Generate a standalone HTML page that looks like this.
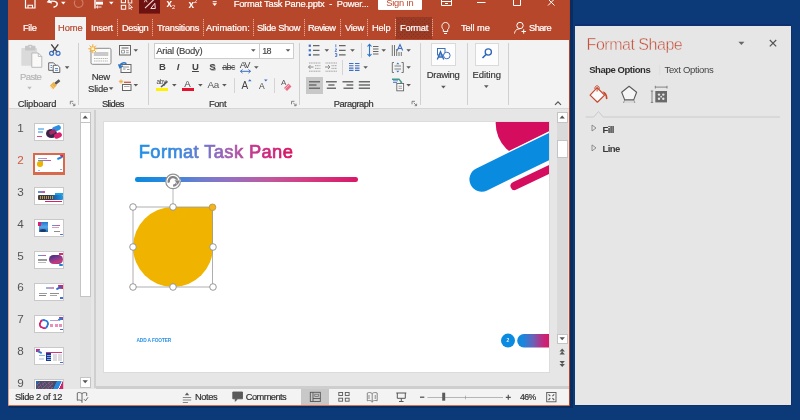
<!DOCTYPE html>
<html>
<head>
<meta charset="utf-8">
<title>Format Task Pane</title>
<style>
*{box-sizing:border-box;margin:0;padding:0}
html,body{width:800px;height:420px;overflow:hidden}
body{background:#0c3a78;font-family:"Liberation Sans",sans-serif;position:relative;font-size:9.5px;color:#333}
.abs{position:absolute}
.t{position:absolute;white-space:nowrap;line-height:1}
#win{position:absolute;left:8px;top:0;width:561px;height:405px;background:#e6e6e6;overflow:hidden;will-change:transform}
#hdr{position:absolute;left:0;top:0;width:561px;height:39.500px;background:#b7472a}
#ribbon{position:absolute;left:0;top:40px;width:561px;height:69px;background:#f3f3f3;border-bottom:1px solid #d6d6d6}
.tab{position:absolute;top:23.8px;color:#fff;font-size:9.3px;-webkit-text-stroke:0.200px currentColor;white-space:nowrap;line-height:1}
.tsep{position:absolute;top:19px;width:1px;height:17px;background:repeating-linear-gradient(to bottom,rgba(255,225,215,.6) 0 1px,rgba(255,225,215,.15) 1px 2px)}
.gsep{position:absolute;top:3px;width:1px;height:62px;background:#d0d0d0}
.glabel{position:absolute;top:59.700px;font-size:9.3px;color:#333;-webkit-text-stroke:0.200px #333;white-space:nowrap;line-height:1}
.rt{font-size:9.500px;color:#333;-webkit-text-stroke:0.150px currentColor}
.dd{position:absolute;width:0;height:0;border-left:2.5px solid transparent;border-right:2.5px solid transparent;border-top:3px solid #555}
.tn{font-size:11.700px}
.th{width:29.500px;height:18.200px;background:#fff;border:1px solid #c9c9c9;overflow:hidden}
.th i{position:absolute;display:block}
#slide{position:absolute;left:96px;top:122px;width:444.600px;height:250px;background:#fff;overflow:hidden;box-shadow:0 0 0 1px #dcdcdc}
#status{position:absolute;left:0;top:389px;width:561px;height:16px;background:#f3f3f3}
.st{font-size:9.300px;color:#333;-webkit-text-stroke:0.200px #333}
#pane{position:absolute;left:575px;top:26px;width:216px;height:379px;background:#e6e6e6;border:1px solid #e6e6e6;box-shadow:0 -2px 0 #0b326c, 0 1px 0 #0b326c, 1px 0 0 #0b326c;will-change:transform}
</style>
</head>
<body>
<div class="abs" style="left:9px;top:0;width:563.500px;height:408px;background:#0a2c60"></div>
<div class="abs" style="left:8px;top:0;width:562px;height:406px;background:#cf7257"></div>
<div class="abs" style="left:569px;top:0;width:1px;height:405.500px;background:#b04426"></div>
<div id="win">
  <div id="hdr">
    <!-- QAT icons -->
    <svg class="abs" style="left:0;top:0" width="232" height="17" viewBox="8 0 232 17" fill="none" stroke="#fff" stroke-width="1.1">
      <!-- save -->
      <path d="M25.5 -2 V8 H35 V-2" stroke-width="1.2"/>
      <path d="M28 8 V5.3 H32.5 V8" />
      <!-- undo -->
      <path d="M51 -1.5 L47.8 1.8 L52 3" stroke-width="1.3"/>
      <path d="M48.5 1.8 C53 0.3 57.5 1.5 57.2 4.3 C57 6 55.5 6.8 53.5 7.2" stroke-width="1.4"/>
      <path d="M61 1.8 L63.3 4.4 L65.6 1.800 Z" fill="#fff" stroke="none"/>
      <!-- redo dim -->
      <path d="M75.200 0.5 A4.3 4.3 0 1 0 80.500 -0.8" stroke="#d07f69" stroke-width="1.1"/>
      <!-- from beginning -->
      <path d="M95 -1 V8.600" stroke-width="1.400"/>
      <rect x="96" y="1.700" width="7" height="2.900" fill="#fff" stroke="none"/>
      <path d="M96 -0.300 H103 M98.500 7 H101.500 M96.300 7 L97.800 5.800 V8.200 Z" stroke-width="0.900"/>
      <path d="M109 1.8 L111.300 4.400 L113.600 1.800 Z" fill="#fff" stroke="none"/>
      <!-- shapes icon -->
      <rect x="121.300" y="-1.500" width="4.200" height="4.200" stroke-width="1"/>
      <rect x="121.300" y="5.300" width="4.400" height="3.900" stroke-width="1"/>
      <rect x="128.200" y="-1.500" width="3.600" height="4.500" stroke-width="0.900"/>
      <path d="M129 4.200 V9.200 L130.300 7.800 L131.500 9.800 M129 4.200 L132.500 7.500 H130.500" stroke-width="0.800"/>
      <!-- highlighted -->
      <rect x="139" y="-1" width="21" height="14.600" fill="#6e1211" stroke="none"/>
      <path d="M145 8.200 L154.300 -0.800" stroke-width="1.100" stroke="#f3dede"/>
      <path d="M154.800 3.300 L150.800 8.500 H155.300 Z" stroke-width="1" stroke="#f3dede" fill="none"/>
      <path d="M144.300 2.300 L145.700 -0.800 L147.100 2.300" stroke-width="0.800" stroke="#f3dede"/>
      <!-- customize -->
      <path d="M212.700 1.700 H216.700" stroke-width="1"/>
      <path d="M212.400 3.300 L214.700 5.900 L217 3.300 Z" fill="#fff" stroke="none"/>
    </svg>
    <div class="t" style="left:158.500px;top:-1.300px;color:#fff;font-size:10px;font-weight:bold">x<span style="font-size:5.500px;vertical-align:-1.500px;font-weight:normal">2</span></div>
    <div class="t" style="left:180.500px;top:-1.300px;color:#fff;font-size:10px;font-weight:bold">x<span style="font-size:5.500px;vertical-align:4.500px;font-weight:normal">2</span></div>
    <div class="t" id="ttl" style="left:225.7px;top:-0.5px;color:#fff;-webkit-text-stroke:0.200px #fff;font-size:9.3px;letter-spacing:-0.22px">Format Task Pane.pptx &nbsp;- &nbsp;Power...</div>
    <div class="abs" style="left:370px;top:-4px;width:44px;height:13.7px;background:#fff;border-radius:1px"></div>
    <div class="t" id="signin" style="left:378.2px;top:-1.3px;color:#c0492c;font-size:9.3px;letter-spacing:-0.17px">Sign in</div>
    <svg class="abs" style="left:425px;top:0" width="136" height="17" viewBox="433 0 136 17" fill="none" stroke="#fff" stroke-width="1">
      <path d="M441.5 -1 V5.5 H451.5 V-1 M441.5 1.5 H451.5 M445 3.5 H448" />
      <path d="M477 2.5 H485.5" />
      <path d="M513.5 -1 V5.5 H520.5 V-1" />
      <path d="M548 -1 L554.5 5.5 M554.5 -1 L548 5.5" />
    </svg>
    <!-- tabs -->
    <div class="abs" style="left:47px;top:17px;width:31px;height:23px;background:#f3f3f3"></div>
    <div class="abs" style="left:388.300px;top:16.500px;width:35.600px;height:22.500px;background:#9c3b24;background-image:radial-gradient(rgba(70,30,50,.5) 0.5px,transparent 0.8px),radial-gradient(rgba(70,30,50,.5) 0.5px,transparent 0.8px);background-size:4.400px 4.400px;background-position:0 0,2.200px 2.200px"></div>
    <div class="tab" id="tb0" style="letter-spacing:-0.37px;left:15px">File</div>
    <div class="tab" id="tb1" style="letter-spacing:-0.02px;left:50px;color:#b7472a">Home</div>
    <div class="tab" id="tb2" style="letter-spacing:-0.21px;left:83px">Insert</div>
    <div class="tab" id="tb3" style="letter-spacing:-0.46px;left:114px">Design</div>
    <div class="tab" id="tb4" style="letter-spacing:-0.28px;left:149px">Transitions</div>
    <div class="tab" id="tb5" style="letter-spacing:-0.02px;left:198px">Animation:</div>
    <div class="tab" id="tb6" style="letter-spacing:-0.35px;left:249px">Slide Show</div>
    <div class="tab" id="tb7" style="letter-spacing:-0.5px;left:300px">Review</div>
    <div class="tab" id="tb8" style="letter-spacing:-0.25px;left:337px">View</div>
    <div class="tab" id="tb9" style="letter-spacing:-0.19px;left:364px">Help</div>
    <div class="tab" id="tb10" style="letter-spacing:-0.23px;left:392px">Format</div>
    <div class="tab" id="tb11" style="letter-spacing:-0.1px;left:453px">Tell me</div>
    <div class="tab" id="tb12" style="letter-spacing:-0.56px;left:521px">Share</div>
    <div class="tsep" style="left:109px"></div>
    <div class="tsep" style="left:144px"></div>
    <div class="tsep" style="left:195px"></div>
    <div class="tsep" style="left:245px"></div>
    <div class="tsep" style="left:296px"></div>
    <div class="tsep" style="left:332px"></div>
    <div class="tsep" style="left:359px"></div>
    <div class="tsep" style="left:387px"></div>
    <div class="tsep" style="left:424px"></div>
    <svg class="abs" style="left:430px;top:19px" width="90" height="20" viewBox="438 19 90 20" fill="none" stroke="#fff" stroke-width="1">
      <path d="M443.3 29.5 C441 27.5 441.5 22.5 445.5 22.5 C449.500 22.5 450 27.5 447.700 29.500 V31.5 H443.3 Z M444 33.5 H447"/>
      <circle cx="520" cy="25.5" r="3.2"/>
      <path d="M514.500 33.500 C515 30 517 29 519.5 29 M521.500 31.500 H526 M523.700 29.300 V33.700"/>
    </svg>
  </div>
  <div class="abs" style="left:0;top:39.500px;width:561px;height:2px;background:#f3f3f3"></div>
  <div id="ribbon">
    <!-- font combo boxes -->
    <div class="abs" style="left:145.500px;top:2.500px;width:106px;height:16px;background:#fff;border:1px solid #cdcdcd"></div>
    <div class="abs" style="left:251.500px;top:2.500px;width:34px;height:16px;background:#fff;border:1px solid #cdcdcd;border-left:none"></div>
    <!-- selected align-left -->
    <div class="abs" style="left:298px;top:36.500px;width:17px;height:17px;background:#c8c8c8"></div>
    <!-- big icon boxes -->
    <div class="abs" style="left:423px;top:2.500px;width:24.500px;height:23px;background:#fdfdfd;border:1px solid #dadada"></div>
    <div class="abs" style="left:467px;top:2.500px;width:24px;height:23px;background:#fdfdfd;border:1px solid #dadada"></div>
    <!-- group separators -->
    <div class="gsep" style="left:70px"></div>
    <div class="gsep" style="left:139.500px"></div>
    <div class="gsep" style="left:291px"></div>
    <div class="gsep" style="left:412px"></div>
    <div class="gsep" style="left:458.500px"></div>
    <div class="gsep" style="left:499.500px"></div>
    <!-- small separators -->
    <div class="abs" style="left:225.500px;top:38px;width:1px;height:15px;background:#d4d4d4"></div>
    <div class="abs" style="left:265.700px;top:38px;width:1px;height:15px;background:#d4d4d4"></div>
    <div class="abs" style="left:352.800px;top:3px;width:1px;height:15px;background:#d4d4d4"></div>
    <div class="abs" style="left:334px;top:20px;width:1px;height:15px;background:#d4d4d4"></div>
    <!-- texts -->
    <div class="t rt" id="r_paste" style="letter-spacing:-0.6px;left:12px;top:31.800px;color:#b4b4b4">Paste</div>
    <div class="t rt" id="r_new" style="letter-spacing:-0.3px;left:83.800px;top:31.800px">New</div>
    <div class="t rt" id="r_slide" style="letter-spacing:-0.18px;left:80px;top:43.600px">Slide</div>
    <div class="t rt" id="r_arial" style="letter-spacing:-0.28px;left:148.200px;top:6.300px;color:#444">Arial (Body)</div>
    <div class="t rt" id="r_18" style="left:254.300px;top:6.500px;color:#444;font-size:9px;letter-spacing:-0.8px">18</div>
    <div class="t rt" id="r_drawing" style="letter-spacing:-0.28px;left:418.700px;top:30.300px">Drawing</div>
    <div class="t rt" id="r_editing" style="letter-spacing:-0.08px;left:464.500px;top:30.300px">Editing</div>
    <div class="glabel" id="g_clip" style="letter-spacing:-0.14px;left:9.700px">Clipboard</div>
    <div class="glabel" id="g_slides" style="letter-spacing:-0.55px;left:93.900px">Slides</div>
    <div class="glabel" id="g_font" style="letter-spacing:-0.37px;left:201px">Font</div>
    <div class="glabel" id="g_para" style="letter-spacing:-0.44px;left:325.800px">Paragraph</div>
    <!-- B I U S abc -->
    <div class="t" style="left:151px;top:22.300px;font-size:9.500px;font-weight:bold;color:#444">B</div>
    <div class="t" style="left:168.700px;top:22.300px;font-size:9.500px;font-style:italic;font-weight:bold;color:#444">I</div>
    <div class="t" style="left:184px;top:22.300px;font-size:9.500px;font-weight:bold;color:#444;text-decoration:underline">U</div>
    <div class="t" style="left:201.200px;top:22.300px;font-size:9.500px;font-weight:bold;color:#444;text-shadow:0.8px 0.8px 0 #aaa">S</div>
    <div class="t" style="left:214.200px;top:22.500px;font-size:9px;color:#4a4a4a;text-decoration:line-through;letter-spacing:-0.650px">abc</div>
    <div class="t" style="left:231.800px;top:21px;font-size:9.300px;color:#444;letter-spacing:-1px">AV</div>
    <div class="t" style="left:148.500px;top:38.500px;font-size:6.500px;color:#444;letter-spacing:-0.3px">aby</div>
    <div class="t" style="left:176.200px;top:39px;font-size:9.700px;color:#444">A</div>
    <div class="t" style="left:199.500px;top:40px;font-size:9.800px;color:#555;letter-spacing:-0.400px">Aa</div>
    <div class="t" style="left:233.600px;top:41.300px;font-size:10px;color:#444">A</div>
    <div class="t" style="left:251px;top:41.500px;font-size:8.500px;color:#444">A</div>
    <div class="t" style="left:273px;top:38.500px;font-size:8px;color:#555">A</div>
    <div class="abs" style="left:148.300px;top:47.800px;width:12px;height:3px;background:#fff100"></div>
    <div class="abs" style="left:174.300px;top:47.800px;width:11.800px;height:3px;background:#e8112d"></div>
    <svg class="abs" style="left:0;top:0" width="561" height="69" viewBox="8 40 561 69" fill="none">
      <!-- dropdown arrows -->
      <g fill="#5a5a5a">
        <path d="M64.800 66.300 h4.600 l-2.300 2.600z"/>
        <path d="M108.800 87.300 h4.600 l-2.300 2.600z"/>
        <path d="M133.500 49.200 h4.600 l-2.300 2.600z"/>
        <path d="M133.500 84 h4.600 l-2.300 2.600z"/>
        <path d="M251 49.200 h4.600 l-2.300 2.600z"/>
        <path d="M285.700 49.200 h4.600 l-2.300 2.600z"/>
        <path d="M254 66.200 h4.600 l-2.300 2.600z"/>
        <path d="M172 84 h4.600 l-2.300 2.600z"/>
        <path d="M198.100 84 h4.600 l-2.300 2.600z"/>
        <path d="M222.100 84 h4.600 l-2.300 2.600z"/>
        <path d="M324.500 49.200 h4.600 l-2.300 2.600z"/>
        <path d="M350.200 49.200 h4.600 l-2.300 2.600z"/>
        <path d="M381.400 49.200 h4.600 l-2.300 2.600z"/>
        <path d="M363.300 66.200 h4.600 l-2.300 2.600z"/>
        <path d="M406.300 49.200 h4.600 l-2.300 2.600z"/>
        <path d="M406.300 66.200 h4.600 l-2.300 2.600z"/>
        <path d="M406.300 84 h4.600 l-2.300 2.600z"/>
        <path d="M441.100 85.800 h4.600 l-2.300 2.600z"/>
        <path d="M484 85.300 h4.600 l-2.300 2.600z"/>
      </g>
      <path d="M27.200 86.800 h4.600 l-2.300 2.600z" fill="#bdbdbd"/>
      <!-- launchers -->
      <g stroke="#6a6a6a" stroke-width="0.800">
        <path d="M70.3 104.300 V101.300 H73.3 M72.1 102.800 L74.7 105.500 M74.9 103.700 V105.700 H72.9"/>
        <path d="M291.5 104.300 V101.300 H294.5 M293.3 102.800 L295.9 105.500 M296.1 103.700 V105.700 H294.1"/>
        <path d="M412.0 104.300 V101.300 H415.0 M413.8 102.800 L416.4 105.500 M416.6 103.700 V105.700 H414.6"/>
      </g>
      <path d="M555 104.800 L558 101.800 L561 104.800" stroke="#555" stroke-width="1.200"/>
      <!-- Paste (disabled) -->
      <rect x="21.300" y="48" width="15.800" height="17.800" rx="1" fill="#dadada"/>
      <rect x="25" y="45.800" width="10.500" height="4.700" rx="1" fill="#c6c6c6"/>
      <rect x="28" y="44.800" width="4.500" height="3" rx="1.300" fill="#c6c6c6"/>
      <circle cx="30.250" cy="46.800" r="0.900" fill="#ececec"/>
      <path d="M31.800 53 H38.300 L41.800 56.500 V67.300 H31.800 Z" fill="#fbf8f8" stroke="#b4b4b4" stroke-width="0.900"/>
      <path d="M38.300 53 V56.500 H41.800" stroke="#b4b4b4" stroke-width="0.800"/>
      <!-- scissors -->
      <path d="M51.300 44.300 L57.300 52.300 M58.300 44.300 L52.300 52.300" stroke="#444" stroke-width="1.400"/>
      <circle cx="51.600" cy="53.300" r="2" stroke="#3a6fc4" stroke-width="1.200"/>
      <circle cx="58" cy="53.300" r="2" stroke="#3a6fc4" stroke-width="1.200"/>
      <!-- copy -->
      <path d="M48.700 62.800 H53.500 L55.500 64.800 V70.300 H48.700 Z" fill="#fafafa" stroke="#555" stroke-width="0.900"/>
      <path d="M53.200 65.300 H57.700 L59.800 67.400 V72.500 H53.200 Z" fill="#fafafa" stroke="#555" stroke-width="0.900"/>
      <path d="M50.500 65.500 H52 M50.500 67.500 H52 M55 68.500 H58 M55 70.300 H58" stroke="#3a6fc4" stroke-width="0.800"/>
      <!-- format painter -->
      <path d="M55 84 L59.500 80.300" stroke="#555" stroke-width="2.600"/>
      <path d="M50 85.500 L53.500 82 L56.800 85.300 L53.300 89.300 Z" fill="#eeb14a"/>
      <path d="M50 86.500 L52.500 89.500 M52 85 L54.500 88" stroke="#f7d9a0" stroke-width="0.600"/>
      <!-- New slide -->
      <rect x="91" y="48.300" width="20" height="16" rx="1.500" fill="#fbfbfb" stroke="#8a8a8a" stroke-width="1"/>
      <rect x="93.800" y="52" width="14.500" height="4" fill="#c9c9c9"/>
      <path d="M94 58.500 H108 M94 61 H108" stroke="#b5b5b5" stroke-width="1" stroke-dasharray="1.500 0.700"/>
      <g stroke="#f0a830" stroke-width="1">
        <path d="M92.800 44.300 V53.300 M88.300 48.800 H97.300 M89.600 45.600 L96 52 M96 45.600 L89.600 52"/>
      </g>
      <rect x="91" y="47" width="3.600" height="3.600" fill="#fff3c4" stroke="#f0a830" stroke-width="0.700"/>
      <!-- layout -->
      <rect x="119.500" y="45.500" width="11" height="9.500" fill="#fafafa" stroke="#666" stroke-width="1"/>
      <path d="M121.500 48 H128.500" stroke="#777" stroke-width="1.200"/>
      <path d="M121.500 50.300 H124.500 V53 H121.500 Z M126 50.700 H128.700 M126 52.700 H128.700" stroke="#888" stroke-width="0.800"/>
      <!-- reset -->
      <rect x="121" y="64.500" width="10" height="8" fill="#fafafa" stroke="#666" stroke-width="1"/>
      <path d="M123 67 H129 M123 69 H125.500 M127 69.500 H129.500" stroke="#888" stroke-width="0.900"/>
      <path d="M120 67.300 C119.300 63.500 123.500 61.800 126.500 63.600 M118.600 64.300 L119.900 67.800 L122.900 65.800" stroke="#2e75c8" stroke-width="1.400"/>
      <!-- section -->
      <path d="M124 82.300 H131" stroke="#d0563a" stroke-width="1.300"/>
      <rect x="122.500" y="84.500" width="8.500" height="6" fill="#fafafa" stroke="#666" stroke-width="1"/>
      <path d="M124 86.500 H129.500" stroke="#999" stroke-width="0.800"/>
      <path d="M121 79.300 V83.700 M118.800 81.500 H123.200 M119.500 80 L122.500 83 M122.500 80 L119.500 83" stroke="#f0a830" stroke-width="0.700"/>
      <!-- AV arrow -->
      <path d="M240.500 71.300 H250.500 M242.500 69.500 L240.500 71.300 L242.500 73.100 M248.500 69.500 L250.500 71.300 L248.500 73.100" stroke="#3a6fc4" stroke-width="1"/>
      <!-- highlighter pen -->
      <path d="M161 87 L167.500 81.300" stroke="#555" stroke-width="1.600"/>
      <!-- grow/shrink carets -->
      <path d="M248 81.300 L249.800 79.300 L251.600 81.300 Z" fill="#3a6fc4"/>
      <path d="M264 79.500 L265.800 81.500 L267.600 79.500 Z" fill="#3a6fc4"/>
      <!-- clear formatting eraser -->
      <path d="M284 88 L288.500 83.500 L291.500 86.500 L287 91 Z" fill="#e8708a"/>
      <path d="M285 89 L289.500 84.500" stroke="#f8c0cc" stroke-width="0.800"/>
      <!-- bullets -->
      <g fill="#3a6fc4"><rect x="308.700" y="44.600" width="2.200" height="2.200"/><rect x="308.700" y="49.200" width="2.200" height="2.200"/><rect x="308.700" y="53.800" width="2.200" height="2.200"/></g>
      <path d="M313 45.700 H319.500 M313 50.300 H319.500 M313 54.900 H319.500" stroke="#666" stroke-width="1.200"/>
      <!-- numbering -->
      <path d="M335.800 44.300 V47.300 M335 49 H336.800 L335 51.500 H336.800 M335 53.500 H336.800 V56.500 H335 M335.500 55 H336.800" stroke="#3a6fc4" stroke-width="0.800"/>
      <path d="M339 45.700 H345.600 M339 50.300 H345.600 M339 54.900 H345.600" stroke="#666" stroke-width="1.200"/>
      <!-- line spacing -->
      <path d="M369.500 44.500 V56 M367.500 46.500 L369.500 44.300 L371.500 46.500 M367.500 54 L369.500 56.200 L371.500 54" stroke="#2e75c8" stroke-width="1.100"/>
      <path d="M373 46.500 H378.500 M373 49 H378.500 M373 51.500 H378.500 M373 54 H378.500" stroke="#666" stroke-width="1"/>
      <!-- text direction -->
      <path d="M392.300 45 V56 M394.500 45 V56 M396.700 49 V56 M399 52 V56 M401.300 52 V56" stroke="#666" stroke-width="0.900"/>
      <path d="M397.300 50.500 L400 44.500 L402.700 50.500 M398.300 48.500 H401.700" stroke="#3a6fc4" stroke-width="1.100"/>
      <!-- decrease / increase indent -->
      <path d="M309 63 H320.500 M315 65.700 H320.500 M315 68.400 H320.500 M309 71.200 H320.500" stroke="#9a9a9a" stroke-width="0.900" stroke-dasharray="1.200 0.500"/>
      <path d="M308.500 67 H313.500 M310.500 65 L308.500 67 L310.500 69" stroke="#8a8a8a" stroke-width="1"/>
      <path d="M325.500 63 H337 M331.500 65.700 H337 M331.500 68.400 H337 M325.500 71.200 H337" stroke="#9a9a9a" stroke-width="0.900" stroke-dasharray="1.200 0.500"/>
      <path d="M325 67 H330 M328 65 L330 67 L328 69" stroke="#8a8a8a" stroke-width="1"/>
      <!-- columns -->
      <path d="M349 63.500 H353.500 M349 65.800 H353.500 M349 68.100 H353.500 M349 70.400 H353.500 M355 63.500 H359.500 M355 65.800 H359.500 M355 68.100 H359.500 M355 70.400 H359.500" stroke="#3a6fc4" stroke-width="1.100"/>
      <!-- align text -->
      <path d="M394 62.500 H392.300 V72.500 H394 M401.500 62.500 H403.300 V72.500 H401.500" stroke="#666" stroke-width="0.900"/>
      <path d="M394.500 66 H401 M394.500 69 H401" stroke="#777" stroke-width="0.900"/>
      <path d="M396.300 64.300 L397.800 62.500 L399.300 64.300 Z M396.300 70.700 L397.800 72.500 L399.300 70.700 Z" fill="#3a6fc4"/>
      <!-- smartart -->
      <path d="M392 79.300 H399 L401.500 82.300 L399 85.300" stroke="#3f9a8a" stroke-width="1.400"/>
      <path d="M393 80.800 H398 M393 82.500 H397" stroke="#3a6fc4" stroke-width="0.800"/>
      <rect x="396.800" y="83.500" width="6.800" height="7.300" fill="#fafafa" stroke="#666" stroke-width="0.900"/>
      <path d="M398.500 86.200 H402 M398.500 88.300 H402" stroke="#888" stroke-width="0.800"/>
      <!-- align left/center/right/justify -->
      <g stroke="#6e6e6e" stroke-width="1.400">
        <path d="M309 81.700 H320 M309 85 H316.500 M309 88.300 H320"/>
        <path d="M326 81.700 H336.800 M328.300 85 H334.500 M326.800 88.300 H336"/>
        <path d="M342.500 81.700 H353.300 M346.500 85 H353.300 M343.500 88.300 H353.300"/>
        <path d="M358.800 81.700 H370 M358.800 85 H370 M358.800 88.300 H370"/>
      </g>
      <!-- Drawing icon -->
      <rect x="437.500" y="48.500" width="7.500" height="6.500" stroke="#3a6fc4" stroke-width="1"/>
      <circle cx="446.800" cy="55.500" r="3.300" fill="#fdfdfd" stroke="#3a6fc4" stroke-width="1"/>
      <path d="M437.300 59.500 L440.500 51.800 L443.700 59.500 M438.500 57 H442.500" stroke="#2e66b8" stroke-width="1.300" fill="none"/>
      <!-- Editing icon -->
      <circle cx="488.300" cy="52" r="3.100" stroke="#2e66b8" stroke-width="1.300"/>
      <path d="M486 54.500 L482.500 58" stroke="#2e66b8" stroke-width="1.600"/>
    </svg>
  </div>
  <div id="work">
<div class="t tn" style="left:9.200px;top:121.97px;color:#555">1</div>
<div class="abs th" style="left:26.300px;top:123.30px"><i style="left:3px;top:4px;width:6px;height:1.500px;background:#8fc7f0"></i><i style="left:3px;top:7px;width:5px;height:1.500px;background:#8fc7f0"></i><i style="left:2px;top:11.500px;width:5px;height:1.500px;background:#e0458a"></i><i style="left:11px;top:4.500px;width:11px;height:9px;border-radius:50%;background:#3a2348"></i><i style="left:17px;top:1.500px;width:9px;height:5px;border-radius:3px;background:#2d8fe0;transform:rotate(-25deg)"></i><i style="left:19px;top:9px;width:8px;height:5px;border-radius:3px;background:#d8206e;transform:rotate(-25deg)"></i><i style="left:14px;top:6px;width:7px;height:4px;border-radius:2px;background:#a02868;transform:rotate(-25deg)"></i></div>
<div class="t tn" style="left:9.200px;top:153.87px;color:#d05a3a">2</div>
<div class="abs" style="left:24.600px;top:153.00px;width:32.400px;height:21.600px;background:#d8694a"></div>
<div class="abs th" style="left:26.800px;top:155.20px;width:28px;height:17.200px;border:none"><i style="left:2.800px;top:2.400px;width:9.600px;height:1.100px;background:linear-gradient(90deg,#7ab8ee,#e070aa)"></i><i style="left:2.800px;top:5.100px;width:13.400px;height:0.900px;background:linear-gradient(90deg,#4aa0e8,#d8509a)"></i><i style="left:2.400px;top:6.300px;width:5.500px;height:5.300px;border-radius:50% 0 50% 50%;background:#f0b400"></i><i style="left:21.800px;top:1.800px;width:5.500px;height:2px;border-radius:1px;background:#1a8ae0;transform:rotate(-25deg)"></i><i style="left:25.300px;top:0.300px;width:2.700px;height:2px;background:#d8206e;border-radius:0 0 0 2.500px"></i><i style="left:24.800px;top:14.300px;width:2.600px;height:1px;background:#7a9ae0;border-radius:1px"></i><i style="left:2.800px;top:14.500px;width:2px;height:0.700px;background:#9ac0ee"></i></div>
<div class="t tn" style="left:9.200px;top:185.77px;color:#555">3</div>
<div class="abs th" style="left:26.300px;top:187.10px"><i style="left:3px;top:3px;width:7px;height:1.500px;background:linear-gradient(90deg,#4aa0e8,#d8509a)"></i><i style="left:3px;top:6.500px;width:25px;height:5.500px;background:linear-gradient(90deg,#4a4038,#2a3a58 40%,#1a78c8 80%,#20a0e0);border-radius:1px"></i><i style="left:5px;top:8px;width:13px;height:2.500px;background:repeating-linear-gradient(90deg,#e0b040 0 1px,#3a3040 1px 2px);opacity:.8"></i><i style="left:20px;top:4.500px;width:8px;height:2px;background:#20a0e0"></i><i style="left:10px;top:12.500px;width:17px;height:1.300px;background:#d8206e"></i></div>
<div class="t tn" style="left:9.200px;top:217.67px;color:#555">4</div>
<div class="abs th" style="left:26.300px;top:219.00px"><i style="left:3.500px;top:1.500px;width:9px;height:10px;background:linear-gradient(180deg,#2078d0,#58a8e8 50%,#2868b0)"></i><i style="left:3px;top:1.500px;width:2.500px;height:4px;background:#d8206e"></i><i style="left:5px;top:8.500px;width:6px;height:3px;background:#1a3a70;border-radius:50%"></i><i style="left:17px;top:4.500px;width:8px;height:1.500px;background:linear-gradient(90deg,#4aa0e8,#d8509a)"></i><i style="left:17px;top:7px;width:7px;height:1px;background:#d8a0c0"></i><i style="left:19px;top:10.500px;width:6px;height:1.200px;background:#8e8e8e"></i><i style="left:25px;top:13.500px;width:3px;height:1.300px;background:#4a6ad0;border-radius:1px"></i></div>
<div class="t tn" style="left:9.200px;top:249.57px;color:#555">5</div>
<div class="abs th" style="left:26.300px;top:250.90px"><i style="left:3px;top:3px;width:8px;height:1.300px;background:linear-gradient(90deg,#4aa0e8,#d8509a)"></i><i style="left:3px;top:7.500px;width:9px;height:1.200px;background:#9a9a9a"></i><i style="left:3px;top:9.800px;width:8px;height:0.800px;background:#bbb"></i><i style="left:14px;top:3.500px;width:14px;height:8.500px;border-radius:4.500px;background:linear-gradient(160deg,#3a2a70,#7a3a90 40%,#d03878 75%,#3a4898)"></i><i style="left:24px;top:1.500px;width:4px;height:2px;background:#e02870"></i><i style="left:24px;top:12.500px;width:4px;height:1.300px;background:#2080e0;border-radius:1px"></i></div>
<div class="t tn" style="left:9.200px;top:281.47px;color:#555">6</div>
<div class="abs th" style="left:26.300px;top:282.80px"><i style="left:11px;top:3.500px;width:8px;height:1.300px;background:linear-gradient(90deg,#8ab8e8,#e088b8)"></i><i style="left:22.500px;top:1px;width:5.500px;height:4.500px;background:#d8206e;border-radius:0 0 0 4px"></i><i style="left:21px;top:3.500px;width:6px;height:2.300px;background:#2868d0;border-radius:1px;transform:rotate(-25deg)"></i><i style="left:3.500px;top:9px;width:8px;height:1.200px;background:#9a9a9a"></i><i style="left:3.500px;top:11.500px;width:7px;height:1.200px;background:#888"></i><i style="left:15px;top:9px;width:9px;height:1.200px;background:#8e8e8e"></i><i style="left:15px;top:11.500px;width:7px;height:1.200px;background:#a4a4a4"></i><i style="left:25px;top:13.700px;width:3px;height:1.200px;background:#4a6ad0"></i></div>
<div class="t tn" style="left:9.200px;top:313.37px;color:#555">7</div>
<div class="abs th" style="left:26.300px;top:314.70px"><i style="left:3.500px;top:3.500px;width:9.500px;height:9.500px;border-radius:50%;border:2.600px solid #2a7ad8;border-bottom-color:#d8206e;border-left-color:#d8206e;transform:rotate(20deg)"></i><i style="left:15px;top:4.500px;width:8px;height:1.200px;background:linear-gradient(90deg,#8ab8e8,#e088b8)"></i><i style="left:23.500px;top:1px;width:4.500px;height:3px;background:#d8206e;border-radius:0 0 0 3px"></i><i style="left:22.500px;top:2.500px;width:5px;height:1.800px;background:#2a7ad8;transform:rotate(-25deg)"></i><i style="left:15px;top:8.500px;width:3px;height:2.500px;background:#e890b8"></i><i style="left:19.500px;top:8.500px;width:3px;height:2.500px;background:#e890b8"></i><i style="left:24px;top:8.500px;width:3px;height:2.500px;background:#e890b8"></i><i style="left:24.500px;top:13px;width:3px;height:1.200px;background:#4a6ad0"></i></div>
<div class="t tn" style="left:9.200px;top:345.27px;color:#555">8</div>
<div class="abs th" style="left:26.300px;top:346.60px"><i style="left:1px;top:1px;width:4px;height:3px;background:#d8206e;border-radius:0 0 3px 0"></i><i style="left:2px;top:3px;width:5px;height:1.800px;background:#2a7ad8;transform:rotate(25deg)"></i><i style="left:11px;top:4px;width:15.500px;height:1.100px;background:linear-gradient(90deg,#b83a88,#e03878)"></i><i style="left:3.500px;top:7px;width:6px;height:1.200px;background:#8ab8e8"></i><i style="left:3.500px;top:10px;width:5px;height:2.500px;background:#d0dff0"></i><i style="left:11px;top:5.300px;width:5px;height:8.500px;background:#1a3a90"></i><i style="left:12px;top:7px;width:3.500px;height:5px;background:repeating-linear-gradient(0deg,#88a8e0 0 1px,#1a3a90 1px 2px)"></i><i style="left:17.500px;top:6.500px;width:4px;height:6.500px;background:#dcdce0"></i><i style="left:22.500px;top:6.500px;width:4px;height:6.500px;background:#dcdce0"></i><i style="left:25px;top:14.500px;width:3px;height:1.200px;background:#4a6ad0"></i></div>
<div class="t tn" style="left:9.200px;top:377.17px;color:#555">9</div>
<div class="abs th" style="left:26.300px;top:378.50px"><i style="left:1px;top:1px;width:27.500px;height:16px;background:linear-gradient(115deg,#1a6ac0 0 6%,#4a4e66 8% 30%,#5a5068 40%,#444a68 58%,#2a8ae0 60% 72%,#e8eef8 73% 75%,#d8206e 76% 90%,#2a8ae0 92%)"></i><i style="left:2px;top:2px;width:16px;height:14px;background:repeating-linear-gradient(60deg,rgba(216,60,130,.45) 0 0.800px,rgba(40,50,90,.0) 0.800px 2.700px),repeating-linear-gradient(-40deg,rgba(120,150,220,.4) 0 0.700px,rgba(40,50,90,0) 0.700px 3.100px)"></i><i style="left:1px;top:12px;width:5px;height:6px;background:#d8206e;transform:skewX(-30deg)"></i></div>

    <!-- thumbnail scrollbar -->
    <div class="abs" style="left:71.500px;top:111.500px;width:11.500px;height:276px;background:#d4d4d4;background-image:radial-gradient(#e8e8e8 0.6px,transparent 0.9px);background-size:2px 2px"></div>
    <div class="abs" style="left:71.500px;top:111.500px;width:11.500px;height:185.500px;background:#fff;border:1px solid #c4c4c4"></div>
    <div class="abs" style="left:71.500px;top:111.500px;width:11.500px;height:11px;background:#fff;border:1px solid #c4c4c4"></div>
    <div class="abs" style="left:71.500px;top:376.500px;width:11.500px;height:11px;background:#fff;border:1px solid #c4c4c4"></div>
    <!-- splitter -->
    <div class="abs" style="left:86px;top:110px;width:1.500px;height:278px;background:#cfcfcf"></div>
    <div class="abs" style="left:87.500px;top:386.200px;width:474px;height:2.800px;background:#cecece"></div>
    <!-- right scrollbar -->
    <div class="abs" style="left:548.500px;top:111.500px;width:11.500px;height:232px;background:#dadada"></div>
    <div class="abs" style="left:548.500px;top:111.500px;width:11.500px;height:11px;background:#fff;border:1px solid #c4c4c4"></div>
    <div class="abs" style="left:548.500px;top:139.500px;width:11.500px;height:18px;background:#fff;border:1px solid #c4c4c4"></div>
    <div class="abs" style="left:548.500px;top:333.500px;width:11.500px;height:10.500px;background:#fff;border:1px solid #c4c4c4"></div>
    <svg class="abs" style="left:0;top:109px" width="561" height="280" viewBox="8 109 561 280">
      <g fill="#555">
        <path d="M82.500 118.600 h5.400 l-2.700 -3z"/>
        <path d="M82.500 380.300 h5.400 l-2.700 3z"/>
        <path d="M559.500 118.600 h5.400 l-2.700 -3z"/>
        <path d="M559.500 337.300 h5.400 l-2.700 3z"/>
        <path d="M559.500 351.500 h5.400 l-2.700 -3z M559.500 354.500 h5.400 l-2.700 -3z"/>
        <path d="M559.500 361 h5.400 l-2.700 3z M559.500 364 h5.400 l-2.700 3z"/>
      </g>
    </svg>
    <div id="slide">
      
      <div class="abs" style="left:30.700px;top:55.200px;width:223.500px;height:4.600px;border-radius:2.300px;background:linear-gradient(90deg,#0a8ae0 0%,#2a88e0 14%,#6a7ed0 28%,#9270c4 42%,#c0589e 60%,#d43a80 78%,#d81868 100%)"></div>
      <svg class="abs" style="left:0;top:0" width="445" height="250" viewBox="104 122 445 250">
        <defs>
          <linearGradient id="pg" gradientUnits="userSpaceOnUse" x1="517" x2="549" y1="0" y2="0"><stop offset="0" stop-color="#0a8ae0"/><stop offset="0.2" stop-color="#1a86dc"/><stop offset="0.5" stop-color="#6a62b8"/><stop offset="0.8" stop-color="#c02a80"/><stop offset="1" stop-color="#d81868"/></linearGradient>
        </defs>
        <linearGradient id="tg" gradientUnits="userSpaceOnUse" x1="138" x2="293" y1="0" y2="0"><stop offset="0" stop-color="#1f90e4"/><stop offset="0.28" stop-color="#3f88dc"/><stop offset="0.42" stop-color="#6f78cc"/><stop offset="0.55" stop-color="#9a62b8"/><stop offset="0.68" stop-color="#b84a9c"/><stop offset="0.8" stop-color="#cc2c84"/><stop offset="1" stop-color="#d8145e"/></linearGradient>
        <text id="stitle" x="138.800" y="158.400" font-family="Liberation Sans, sans-serif" font-size="18.300" font-weight="normal" fill="url(#tg)" stroke="url(#tg)" stroke-width="0.700" letter-spacing="0.400">Format Task Pane</text>
        <!-- top right decoration -->
        <circle cx="531" cy="123.600" r="35.300" fill="#d40d5e"/>
        <path d="M481.700 179.400 L570 136.300" stroke="#fff" stroke-width="27.300" stroke-linecap="round"/>
        <path d="M481.700 179.400 L570 136.300" stroke="#098be0" stroke-width="24.500" stroke-linecap="round"/>
        <path d="M514.600 185.900 L570 159.400" stroke="#d40d5e" stroke-width="8.200" stroke-linecap="round"/>
        <!-- page number -->
        <circle cx="508" cy="340.600" r="7" fill="#0a8ae0"/>
        <rect x="517.200" y="334" width="45" height="13.400" rx="6.700" fill="url(#pg)"/>
        <!-- teardrop -->
        <path d="M173 207 H213 V247 A40 40 0 1 1 173 207 Z" fill="#f0b400"/>
        <!-- selection -->
        <rect x="133" y="207" width="79.600" height="80" fill="none" stroke="#9c9c9c" stroke-width="0.800"/>
        <path d="M173 188 V207" stroke="#a6a6a6" stroke-width="0.800"/>
        <g fill="#fff" stroke="#8c8c8c" stroke-width="0.900">
          <circle cx="133" cy="207" r="3.300"/><circle cx="173" cy="207" r="3.300"/>
          <circle cx="133" cy="247" r="3.300"/><circle cx="213" cy="247" r="3.300"/>
          <circle cx="133" cy="287" r="3.300"/><circle cx="173" cy="287" r="3.300"/><circle cx="213" cy="287" r="3.300"/>
        </g>
        <circle cx="212.500" cy="207.300" r="3.300" fill="#f4b21c" stroke="#b89a50" stroke-width="0.900"/>
        <!-- rotate handle -->
        <circle cx="173.100" cy="181.400" r="7.300" fill="#fff" stroke="#939393" stroke-width="1.200"/>
        <path d="M168.900 182.600 A4.300 4.300 0 1 1 173.100 185.700" fill="none" stroke="#848484" stroke-width="2.300"/>
        <path d="M174.300 180 L180.600 180.300 L177.700 185.300 Z" fill="#848484" stroke="#fff" stroke-width="0.500"/>
      </svg>
      <div class="t" style="left:32.500px;top:216.700px;font-size:4.800px;color:#2a92e6;font-weight:bold;letter-spacing:-0.120px" id="sfoot">ADD A FOOTER</div>
      <div class="t" style="left:402.600px;top:216.200px;font-size:5px;color:#e8f2fc;font-weight:bold">2</div>
    </div>
  </div>
  <div id="status">
    <div class="abs" style="left:293px;top:0;width:28px;height:16px;background:#c8c8c8"></div>
    <div class="t st" id="s_slide" style="margin-top:0.800px;letter-spacing:-0.350px;left:6.900px;top:3.200px">Slide 2 of 12</div>
    <div class="t st" id="s_notes" style="margin-top:0.800px;letter-spacing:-0.420px;left:187px;top:3.200px">Notes</div>
    <div class="t st" id="s_comm" style="margin-top:0.800px;letter-spacing:-0.590px;left:237.800px;top:3.200px">Comments</div>
    <div class="t st" id="s_zoom" style="margin-top:0.600px;left:512px;top:3.500px;font-size:8.700px;letter-spacing:-0.600px">46%</div>
    <svg class="abs" style="left:0;top:0" width="561" height="16" viewBox="8 389 561 16" fill="none" stroke="#5a5a5a" stroke-width="0.900">
      <!-- spelling -->
      <path d="M82 393.500 C80 392.300 78.500 392.300 77.300 393 V400.300 C78.500 399.800 80 399.800 82 401 M82 393.500 C83.500 392.500 85 392.300 86.700 393 V396 M82 393.500 V402.800 M84 399.200 L85.500 400.800 L88 397.300"/>
      <!-- notes -->
      <path d="M182.800 397.500 H191.200 M182.800 400 H191.200 M182.800 402.500 H188" stroke-width="0.800" stroke="#6a6a6a"/>
      <path d="M184.800 395.300 L187 392.500 L189.200 395.300 Z" fill="#5a5a5a" stroke="none"/>
      <!-- comments -->
      <path d="M232.800 392 H242.500 V398.800 H237.500 L235.300 401.300 V398.800 H232.800 Z" fill="#5a5a5a" stroke="#5a5a5a"/>
      <!-- normal view -->
      <rect x="310.300" y="392.300" width="10" height="9.200" stroke="#555"/>
      <path d="M313 392.300 V401.500 M313 398.500 H320.300" stroke="#555"/>
      <rect x="314.800" y="394.200" width="3.700" height="2.300" stroke="#666" stroke-width="0.700"/>
      <!-- sorter -->
      <rect x="338.800" y="392.500" width="3.800" height="3" /><rect x="345.300" y="392.500" width="3.800" height="3"/>
      <rect x="338.800" y="398.200" width="3.800" height="3" /><rect x="345.300" y="398.200" width="3.800" height="3"/>
      <!-- reading -->
      <path d="M372.200 393.500 C370.500 392.300 369 392.300 367.300 393 V400.800 C369 400.300 370.500 400.300 372.200 401.500 C373.800 400.300 375.500 400.300 377.200 400.800 V393 C375.500 392.300 373.800 392.300 372.200 393.500 V402.500" stroke="#7a7a7a"/>
      <path d="M369 395 V399 M375.300 395 V399" stroke="#aaa" stroke-width="1.400"/>
      <!-- slideshow -->
      <path d="M396.300 393 H406.300 M397.300 393 V398.300 H405.300 V393 M401.300 398.300 V401 M399 401.500 H403.600" stroke="#555" stroke-width="1"/>
      <!-- zoom slider -->
      <path d="M420 397.200 H424.300" stroke="#555" stroke-width="1.300"/>
      <path d="M427.500 397.500 H503" stroke="#9a9a9a" stroke-width="0.700"/>
      <path d="M465.500 395.700 V399.300" stroke="#9a9a9a" stroke-width="0.700"/>
      <rect x="442.200" y="392.700" width="3" height="8" fill="#5a5a5a" stroke="none"/>
      <path d="M505.800 397.300 H510.800 M508.300 394.800 V399.800" stroke="#555" stroke-width="1.200"/>
      <!-- fit -->
      <rect x="546.700" y="392.500" width="9.300" height="9.300" stroke="#555" stroke-width="0.900"/>
      <path d="M548.500 394.300 L550.300 396.100 M554.200 394.300 L552.400 396.100 M548.500 400 L550.300 398.200 M554.200 400 L552.400 398.200" stroke="#555" stroke-width="1.100"/>
    </svg>
  </div>
  <div class="abs" style="left:0;top:40px;width:0.800px;height:365px;background:#e0a48e"></div>
</div>
<div id="pane">
  <div class="t" id="p_title" style="letter-spacing:-0.48px;left:10.600px;top:10px;font-size:16px;color:#c24a31;-webkit-text-stroke:0.450px #e6e6e6">Format Shape</div>
  <div class="t" id="p_so" style="letter-spacing:-0.46px;left:13.200px;top:38.300px;font-size:9.500px;font-weight:bold;color:#2f2f2f">Shape Options</div>
  <div class="t" id="p_to" style="letter-spacing:-0.33px;left:88.500px;top:38.300px;font-size:9.500px;color:#444">Text Options</div>
  <svg class="abs" style="left:-1px;top:-1px" width="216" height="379" viewBox="575 26 216 379" fill="none">
    <path d="M738.400 41.700 h6 l-3 3.300z" fill="#666"/>
    <path d="M769.800 40 L776.200 46.400 M776.200 40 L769.800 46.400" stroke="#555" stroke-width="1.200"/>
    <path d="M659.700 65 V75" stroke="#dadada" stroke-width="0.800"/>
    <!-- fill bucket -->
    <path d="M594.800 88.800 C594.800 84.800 599.300 84.800 599.300 88.800" stroke="#c8472b" stroke-width="1"/>
    <path d="M597.100 87.700 L604.600 95.100 L597.400 102.200 L590.100 95.100 Z" fill="#fbfbfb" stroke="#c8472b" stroke-width="1.200" stroke-linejoin="round"/>
    <path d="M597.100 87.700 V91.500" stroke="#c8472b" stroke-width="1"/>
    <path d="M602.500 91.300 C605.500 92 607.500 94.500 607.500 98.500 C607.500 99.600 605.800 99.600 605.800 98.500 C605.800 96.500 605.300 95 604.300 94 Z" fill="#c8472b"/>
    <!-- pentagon -->
    <path d="M629.100 86.300 L636.600 92.200 L633.700 99.900 H624.700 L621.700 92.200 Z" fill="#f6f6f6" stroke="#5a5a5a" stroke-width="1.100" stroke-linejoin="round"/>
    <path d="M624.700 100 L623.500 103 M633.700 100 L634.900 103" stroke="#8a8a8a" stroke-width="0.900"/>
    <path d="M624.300 102 H634.100" stroke="#c8c8c8" stroke-width="0.800"/>
    <!-- size -->
    <rect x="655.300" y="91" width="11.700" height="11.400" fill="#6a6a6a"/>
    <g fill="#e6e6e6"><circle cx="659" cy="94.600" r="1.200"/><circle cx="663.300" cy="94.600" r="1.200"/><circle cx="659" cy="98.800" r="1.200"/><circle cx="663.300" cy="98.800" r="1.200"/><circle cx="661.150" cy="96.700" r="0.900"/></g>
    <path d="M655.300 87.100 H667 M655.300 85.800 V88.500 M667 85.800 V88.500 M652 91 V102.400 M650.800 91 H653.200 M650.800 102.400 H653.200" stroke="#6a6a6a" stroke-width="0.800"/>
    <!-- separator with notch -->
    <path d="M585.700 117 H593.700 L598.500 111.500 L603.200 117 H780" stroke="#cacaca" stroke-width="1"/>
    <!-- triangles -->
    <path d="M592 125 V131 L596 128 Z" stroke="#7a7a7a" stroke-width="0.800"/>
    <path d="M592 144.900 V150.900 L596 147.900 Z" stroke="#7a7a7a" stroke-width="0.800"/>
  </svg>
  <div class="t" id="p_fill" style="letter-spacing:-0.58px;left:26.500px;top:97.500px;font-size:9.500px;font-weight:bold;color:#3a3a3a">Fill</div>
  <div class="t" id="p_line" style="letter-spacing:-0.6px;left:26.500px;top:117.300px;font-size:9.500px;font-weight:bold;color:#3a3a3a">Line</div>
</div>
</body>
</html>
